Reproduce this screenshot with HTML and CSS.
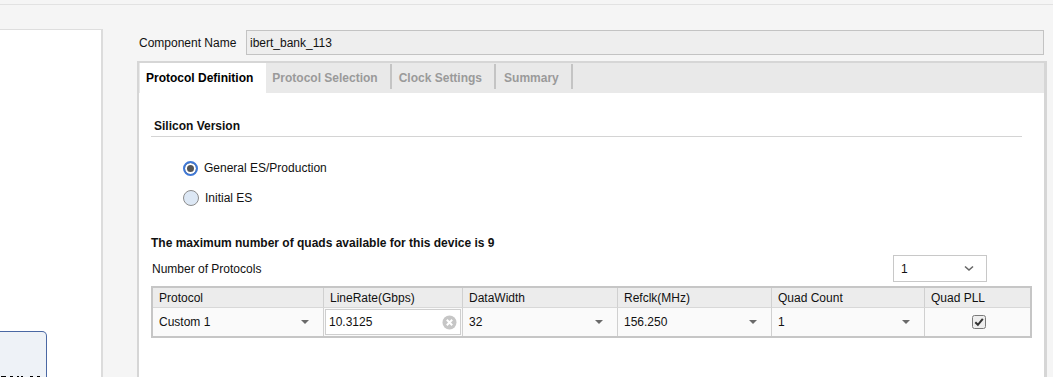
FILE: index.html
```html
<!DOCTYPE html>
<html lang="en">
<head>
    <meta charset="UTF-8">
    <title>IBERT Customize IP</title>
    <link rel="stylesheet" href="styles.css">
</head>
<body>
    <div class="topbar"></div>
    <div class="workspace">
        <div class="side">
            <div class="symbol">
                <svg class="symbol-marks" width="46" height="3" viewBox="0 0 46 3">
                    <rect x="1" y="0" width="5" height="3" fill="#000"/>
                    <rect x="10" y="0" width="3" height="3" fill="#000"/>
                    <rect x="17" y="0" width="2" height="3" fill="#000"/>
                    <rect x="21" y="0" width="2" height="3" fill="#000"/>
                    <rect x="30" y="0" width="3" height="3" fill="#000"/>
                    <rect x="37" y="0" width="3" height="3" fill="#000"/>
                </svg>
            </div>
        </div>
        <div class="main">
            <div class="name-row">
                <label class="name-label" for="compName">Component Name</label>
                <input class="name-input" id="compName" type="text" value="ibert_bank_113" readonly>
            </div>
            <div class="tab-panel">
                <div class="tabs">
                    <div class="tab active">Protocol Definition</div>
                    <div class="tab">Protocol Selection</div>
                    <div class="tab">Clock Settings</div>
                    <div class="tab">Summary</div>
                </div>
                <div class="tab-body">
                    <div class="section-title">Silicon Version</div>
                    <div class="radios">
                        <div class="radio-row">
                            <span class="radio checked"></span>
                            <span>General ES/Production</span>
                        </div>
                        <div class="radio-row">
                            <span class="radio"></span>
                            <span>Initial ES</span>
                        </div>
                    </div>
                    <div class="quad-note">The maximum number of quads available for this device is 9</div>
                    <div class="count-row">
                        <span>Number of Protocols</span>
                        <div class="select">
                            <span>1</span>
                            <svg width="10" height="7" viewBox="0 0 10 7"><path d="M1 1.5 L5 5 L9 1.5" fill="none" stroke="#666" stroke-width="1.6"/></svg>
                        </div>
                    </div>
                    <div class="grid">
                        <div class="th">Protocol</div>
                        <div class="th">LineRate(Gbps)</div>
                        <div class="th">DataWidth</div>
                        <div class="th">Refclk(MHz)</div>
                        <div class="th">Quad Count</div>
                        <div class="th">Quad PLL</div>

                        <div class="td combo first">Custom 1 <span class="caret"></span></div>
                        <div class="td edit">
                            <div class="edit-box">
                                <span>10.3125</span>
                                <svg width="15" height="15" viewBox="0 0 15 15"><circle cx="7.5" cy="7.5" r="7" fill="#c6c6c6"/><path d="M4.8 4.8 L10.2 10.2 M10.2 4.8 L4.8 10.2" stroke="#fff" stroke-width="2"/></svg>
                            </div>
                        </div>
                        <div class="td combo">32 <span class="caret"></span></div>
                        <div class="td combo">156.250 <span class="caret"></span></div>
                        <div class="td combo">1 <span class="caret"></span></div>
                        <div class="td check-cell">
                            <svg width="14" height="14" viewBox="0 0 14 14"><rect x="0.5" y="0.5" width="13" height="13" rx="2" fill="#eeeeee" stroke="#7a7a7a"/><path d="M3.3 7.2 L5.9 9.8 L10.8 3.8" fill="none" stroke="#333" stroke-width="2"/></svg>
                        </div>
                    </div>
                </div>
            </div>
        </div>
    </div>
</body>
</html>
```

FILE: styles.css
```css
body {
    margin: 0;
    background-color: #f5f5f5;
    font-family: "Liberation Sans", Arial, sans-serif;
    font-size: 12px;
    color: #111;
    height: 377px;
    overflow: hidden;
}
.topbar {
    height: 4px;
    border-bottom: 1px solid #e2e2e2;
}
.workspace {
    display: flex;
    height: 372px;
}
.side {
    flex-shrink: 0;
    width: 101px;
    margin-top: 24px;
    background: white;
    border-top: 1px solid #dedede;
    border-right: 2px solid #dcdcdc;
    overflow: hidden;
}
.symbol {
    margin-top: 301px;
    width: 46px;
    height: 60px;
    background: #eef2f7;
    border: 1px solid #4a68a4;
    border-left: none;
    border-top-right-radius: 5px;
    overflow: hidden;
}
.symbol-marks {
    display: block;
    margin-top: 44px;
}
.main {
    flex: 1;
    min-width: 0;
    padding: 25px 6px 0 34px;
    display: flex;
    flex-direction: column;
}
.name-row {
    display: flex;
    align-items: center;
    margin-right: 3px;
}
.name-label {
    width: 107px;
    padding-left: 2px;
    color: #111;
}
.name-input {
    flex: 1;
    height: 25px;
    box-sizing: border-box;
    border: 1px solid #c3c3c3;
    background: #eeeeee;
    font-family: "Liberation Sans", Arial, sans-serif;
    font-size: 12px;
    color: #111;
    padding: 0 3px;
    outline: none;
}
.tab-panel {
    margin-top: 6px;
    flex: 1;
    border: 2px solid #d6d6d6;
    border-bottom: none;
    border-right-width: 3px;
    background: #e9e9e9;
    display: flex;
    flex-direction: column;
}
.tabs {
    display: flex;
    height: 30px;
    padding-left: 1px;
}
.tab {
    display: flex;
    align-items: center;
    font-weight: bold;
    color: #9a9a9a;
    position: relative;
}
.tab + .tab::before {
    content: "";
    position: absolute;
    left: -2px;
    top: 1px;
    bottom: 4px;
    border-left: 2px solid #c4c4c4;
}
.tab:nth-child(2)::before {
    display: none;
}
.tab.active {
    background: white;
    color: #000;
    padding: 0 13px 0 6px;
}
.tab:nth-child(2) {
    padding-left: 6px;
    padding-right: 14px;
}
.tab:nth-child(3) {
    padding-left: 7px;
    padding-right: 14px;
}
.tab:nth-child(4) {
    padding-left: 8px;
    padding-right: 12px;
}
.tab:last-child::after {
    content: "";
    position: absolute;
    right: -2px;
    top: 1px;
    bottom: 4px;
    border-left: 2px solid #c4c4c4;
}
.tab-body {
    flex: 1;
    background: white;
    padding: 26px 22px 0 12px;
}
.section-title {
    font-weight: bold;
    padding: 0 0 3px 3px;
    border-bottom: 1px solid #d4d4d4;
}
.radios {
    padding: 23px 0 0 32px;
}
.radio-row {
    display: flex;
    align-items: center;
    height: 16px;
    margin-bottom: 14px;
    gap: 6px;
}
.radio {
    width: 14px;
    height: 14px;
    border-radius: 50%;
    border: 1px solid #8c8c8c;
    background: #dde8f5;
}
.radio.checked {
    width: 11px;
    height: 11px;
    border: 2px solid #3f78d6;
    background: #555;
    box-shadow: inset 0 0 0 2px white;
}
.quad-note {
    margin-top: 30px;
    font-weight: bold;
}
.count-row {
    display: flex;
    align-items: center;
    justify-content: space-between;
    margin-top: 5px;
    padding-left: 1px;
    margin-right: 35px;
}
.select {
    width: 94px;
    height: 27px;
    box-sizing: border-box;
    border: 1px solid #c8c8c8;
    background: white;
    display: flex;
    align-items: center;
    justify-content: space-between;
    padding: 0 12px 0 7px;
}
.grid {
    margin-top: 4px;
    width: 881px;
    display: grid;
    grid-template-columns: 170px 139px 155px 154px 153px 1fr;
    border: 2px solid #c6c6c6;
    box-sizing: border-box;
}
.th {
    height: 18px;
    padding-top: 1px;
    box-sizing: content-box;
    background: #ececec;
    border-bottom: 1px solid #d8d8d8;
    border-left: 1px solid #d0d0d0;
    padding-left: 6px;
    display: flex;
    align-items: center;
}
.th:first-child {
    border-left: none;
}
.td {
    height: 28px;
    background: #fafafa;
    border-left: 1px solid #d0d0d0;
    display: flex;
    align-items: center;
    box-sizing: border-box;
}
.td.first {
    border-left: none;
}
.td.combo {
    padding: 0 14px 0 6px;
    justify-content: space-between;
}
.caret {
    width: 0;
    height: 0;
    border-left: 4px solid transparent;
    border-right: 4px solid transparent;
    border-top: 4px solid #6a6a6a;
}
.td.edit {
    padding: 1px;
}
.edit-box {
    flex: 1;
    height: 100%;
    box-sizing: border-box;
    border: 1px solid #cfcfcf;
    background: white;
    display: flex;
    align-items: center;
    justify-content: space-between;
    padding: 0 3px 0 3px;
}
.check-cell {
    justify-content: center;
    padding-left: 2px;
}
```
